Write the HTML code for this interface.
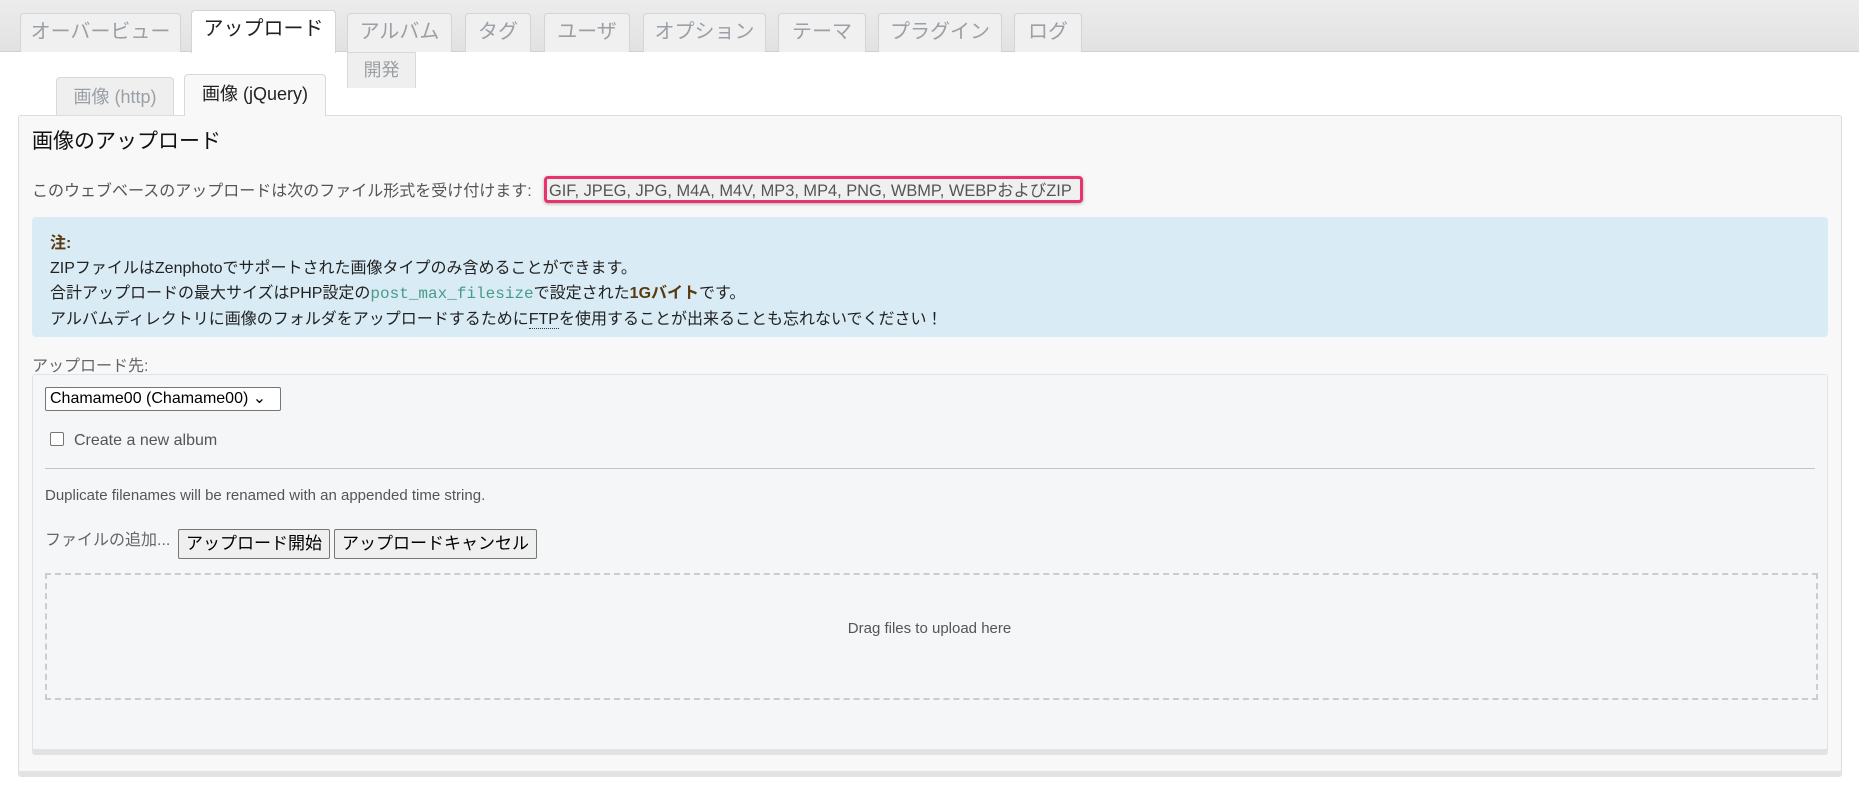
<!DOCTYPE html>
<html><head><meta charset="utf-8"><style>
*{box-sizing:border-box;margin:0;padding:0}
body{width:1859px;height:796px;background:#fff;font-family:"Liberation Sans","Noto Sans CJK JP",sans-serif;position:relative;overflow:hidden;color:#333}
.a{position:absolute}
.bar{left:0;top:0;width:1859px;height:52px;background:linear-gradient(#ececec,#e2e2e2);border-bottom:1px solid #d0d0d0}
.tab{position:absolute;top:13px;height:39px;background:#f0f0f0;border:1px solid #d4d4d4;border-bottom:none;border-radius:4px 4px 0 0;color:#9aa0a6;font-size:20px;text-align:center;line-height:37px}
.tab.sel{top:10px;height:43px;background:#fff;color:#222;line-height:36px}
.sub{position:absolute;background:#efefef;border:1px solid #d8d8d8;border-bottom:none;border-radius:4px 4px 0 0;color:#9aa0a6;font-size:18px;text-align:center}
.t{position:absolute;white-space:nowrap}
</style></head><body>
<div class="a bar"></div>
<div class="tab" style="left:20px;width:161px">オーバービュー</div>
<div class="tab sel" style="left:191px;width:145px">アップロード</div>
<div class="tab" style="left:347px;width:105px">アルバム</div>
<div class="tab" style="left:465px;width:66px">タグ</div>
<div class="tab" style="left:544px;width:86px">ユーザ</div>
<div class="tab" style="left:643px;width:123px">オプション</div>
<div class="tab" style="left:778px;width:88px">テーマ</div>
<div class="tab" style="left:878px;width:124px">プラグイン</div>
<div class="tab" style="left:1014px;width:68px">ログ</div>
<div class="sub" style="left:347px;top:52px;width:69px;height:36px;line-height:34px;border-radius:0 0 0 0;font-size:18px">開発</div>
<div class="a" style="left:18px;top:115px;width:1824px;height:662px;background:#f8f8f8;border:1px solid #ddd;border-bottom:6px solid #e3e3e3;border-radius:3px"></div>
<div class="sub" style="left:56px;top:77px;width:118px;height:38px;line-height:38px">画像 (http)</div>
<div class="sub" style="left:184px;top:74px;width:142px;height:42px;line-height:38px;background:#f8f8f8;color:#222">画像 (jQuery)</div>
<div class="t" style="left:32px;top:125px;font-size:21px;color:#111">画像のアップロード</div>
<div class="t" style="left:32px;top:177px;font-size:16px;color:#555">このウェブベースのアップロードは次のファイル形式を受け付けます:</div>
<div class="a" style="left:544px;top:176px;width:539px;height:27px;border:3px solid #e8336d;border-radius:4px;background:#f0f0f0;box-shadow:0 1px 3px rgba(0,0,0,.3)"></div>
<div class="t" style="left:549px;top:177px;font-size:16.4px;color:#555">GIF, JPEG, JPG, M4A, M4V, MP3, MP4, PNG, WBMP, WEBPおよびZIP</div>
<div class="a" style="left:32px;top:217px;width:1796px;height:120px;background:#d9ecf5;border-radius:4px"></div>
<div class="t" style="left:50px;top:231px;font-size:16px;line-height:25px;color:#222"><b style="color:#5a3a10">注:</b><br>ZIPファイルはZenphotoでサポートされた画像タイプのみ含めることができます。<br>合計アップロードの最大サイズはPHP設定の<span style="font-family:'Liberation Mono',monospace;color:#4a9a8a">post_max_filesize</span>で設定された<b style="color:#5a3a10">1Gバイト</b>です。<br>アルバムディレクトリに画像のフォルダをアップロードするために<span style="border-bottom:1px dotted #333">FTP</span>を使用することが出来ることも忘れないでください！</div>
<div class="t" style="left:32px;top:352px;font-size:16px;color:#666">アップロード先:</div>
<div class="a" style="left:32px;top:374px;width:1796px;height:381px;background:#f5f6f8;border:1px solid #e2e2e2;border-bottom:6px solid #e2e2e2;border-radius:3px"></div>
<div class="a" style="left:45px;top:387px;width:236px;height:24px;background:#fff;border:1px solid #767676;border-radius:2px;font-size:16px;line-height:22px;padding-left:4px;color:#000">Chamame00 (Chamame00) ⌄</div>
<div class="a" style="left:50px;top:432px;width:14px;height:14px;border:1px solid #767676;border-radius:2px;background:#fff"></div>
<div class="t" style="left:74px;top:432px;font-size:16px;color:#555">Create a new album</div>
<div class="a" style="left:45px;top:468px;width:1770px;height:1px;background:#b9c7d0"></div>
<div class="t" style="left:45px;top:487px;font-size:15px;color:#555">Duplicate filenames will be renamed with an appended time string.</div>
<div class="t" style="left:45px;top:526px;font-size:16px;color:#666">ファイルの追加...</div>
<div class="a" style="left:178px;top:529px;width:152px;height:30px;background:#efefef;border:1px solid #767676;border-radius:2px;font-size:17px;line-height:28px;text-align:center;color:#000">アップロード開始</div>
<div class="a" style="left:334px;top:529px;width:203px;height:30px;background:#efefef;border:1px solid #767676;border-radius:2px;font-size:17px;line-height:28px;text-align:center;color:#000">アップロードキャンセル</div>
<div class="a" style="left:45px;top:573px;width:1773px;height:127px;border:2px dashed #ccc"></div>
<div class="t" style="left:0;width:1859px;text-align:center;top:620px;font-size:15px;color:#555">Drag files to upload here</div>
</body></html>
